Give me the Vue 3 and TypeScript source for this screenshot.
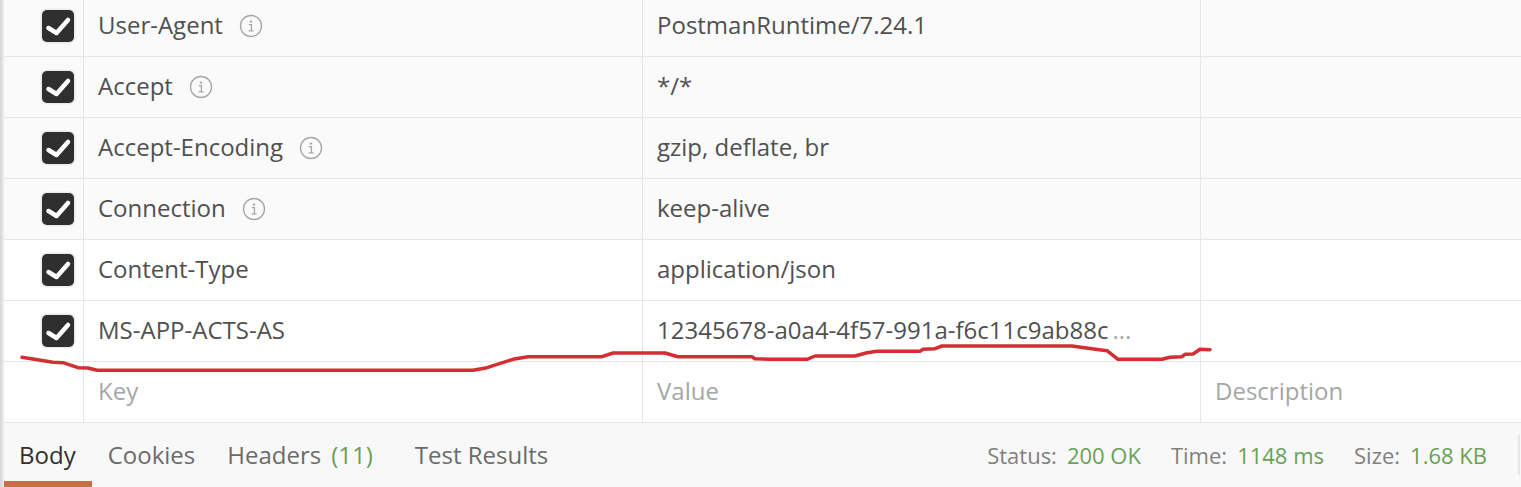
<script setup lang="ts">
interface Row { key: string; value: string; info: boolean; tint: boolean; more?: boolean }
const rows: Row[] = [
  { key: 'User-Agent', value: 'PostmanRuntime/7.24.1', info: true, tint: true },
  { key: 'Accept', value: '*/*', info: true, tint: true },
  { key: 'Accept-Encoding', value: 'gzip, deflate, br', info: true, tint: true },
  { key: 'Connection', value: 'keep-alive', info: true, tint: true },
  { key: 'Content-Type', value: 'application/json', info: false, tint: false },
  { key: 'MS-APP-ACTS-AS', value: '12345678-a0a4-4f57-991a-f6c11c9ab88c', info: false, tint: false, more: true },
]
const redLine = '22,357.3 53,362.3 63,362.7 78,367.7 88,368 97,370.3 473,370.3 487,367.7 513,359.3 528,356.7 602,356.7 613,353 665,353 678,356.7 752,356.7 755,358.7 770,359.3 807,359.3 815,356 855,356 867,352.7 877,351.3 920,351.3 923,349.3 935,348.7 942,346 1072,346 1088,348.3 1107,350.7 1118,359.3 1162,359.3 1170,357.3 1182,356.7 1185,354.3 1193,354 1200,349.3 1210,349.7'
</script>

<template>
  <div class="page">
    <div class="table">
      <div v-for="r in rows" :key="r.key" class="row" :class="{ tint: r.tint }">
        <div class="cell check">
          <span class="box">
            <svg width="32" height="32" viewBox="0 0 32 32"><path d="M6.5 18 L14.5 23 L26 10" fill="none" stroke="#fff" stroke-width="4.5" stroke-linecap="round" stroke-linejoin="round" /></svg>
          </span>
        </div>
        <div class="cell key">
          <span class="txt">{{ r.key }}</span>
          <svg v-if="r.info" class="info" width="24" height="24" viewBox="0 0 24 24">
            <circle cx="12" cy="12" r="10.5" fill="none" stroke="#a6a6a6" stroke-width="1.3" />
            <circle cx="12" cy="7.6" r="1.2" fill="#a6a6a6" />
            <path d="M9.8 10.6H12.4V16.6M9.6 16.8H14.6" fill="none" stroke="#a6a6a6" stroke-width="1.3" />
          </svg>
        </div>
        <div class="cell val">
          <span class="txt">{{ r.value }}</span><span v-if="r.more" class="more txt">...</span>
        </div>
        <div class="cell"></div>
      </div>
      <div class="row">
        <div class="cell check"></div>
        <div class="cell key ph"><span class="txt">Key</span></div>
        <div class="cell val ph"><span class="txt">Value</span></div>
        <div class="cell val ph"><span class="txt">Description</span></div>
      </div>
    </div>
    <div class="footer">
      <div class="tabs">
        <div class="tab active">Body</div>
        <div class="tab">Cookies</div>
        <div class="tab headers">Headers<span class="count">(11)</span></div>
        <div class="tab">Test Results</div>
      </div>
      <div class="meta">
        <span>Status:<b>200 OK</b></span>
        <span>Time:<b>1148 ms</b></span>
        <span>Size:<b>1.68 KB</b></span>
      </div>
      <div class="divider"></div>
    </div>
    <svg class="scribble" width="1521" height="487" viewBox="0 0 1521 487">
      <polyline :points="redLine" fill="none" stroke="#d32f33" stroke-width="3.5" stroke-linejoin="round" stroke-linecap="round" />
    </svg>
  </div>
</template>

<style>
html, body { margin: 0; background: #fff; }
</style>

<style scoped>
.page {
  position: relative;
  width: 1521px;
  height: 487px;
  overflow: hidden;
  box-sizing: border-box;
  padding-left: 3px;
  background: #fff;
  font-family: "Open Sans", sans-serif;
  font-size: 24px;
  color: #505050;
}
.page::before {
  content: "";
  position: absolute;
  left: 0;
  top: 0;
  bottom: 0;
  width: 4px;
  background: linear-gradient(to right, #d4d4d4, #f0f0f0);
}
.table { margin-top: -4px; }
.row {
  display: grid;
  grid-template-columns: 81px 559px 558px 1fr;
  height: 61px;
  box-sizing: border-box;
  border-bottom: 1px solid #e6e6e6;
  background: #fff;
}
.row.tint { background: #fafafa; }
.cell {
  display: flex;
  align-items: center;
  border-right: 1px solid #e6e6e6;
  padding-left: 14px;
  white-space: nowrap;
}
.cell:last-child { border-right: 0; }
.txt { margin-bottom: 4px; }
.check { padding-left: 0; justify-content: flex-end; padding-right: 9px; }
.box {
  display: block;
  width: 32px;
  height: 32px;
  border-radius: 5px;
  background: #2f2f2f;
  box-shadow: 0 0 0 1.5px #eaeaea;
}
.box svg { display: block; }
.info { margin-left: 16px; }
.more { color: #a9a9a9; margin-left: 4px; }
.ph { color: #a6a6a6; }
.footer {
  display: flex;
  align-items: center;
  height: 64px;
  box-sizing: border-box;
  background: #f8f8f8;
}
.tabs { display: flex; height: 100%; }
.tab {
  display: flex;
  align-items: center;
  height: 100%;
  box-sizing: border-box;
  padding: 0 16px 2px;
  color: #6b6b6b;
  white-space: nowrap;
}
.tab.headers { padding-right: 26px; }
.tab.active {
  color: #303030;
  border-bottom: 6px solid #c76f47;
  padding: 4px 16px 0;
}
.count { color: #6a9f58; margin-left: 10px; }
.meta {
  display: flex;
  margin-left: auto;
  gap: 30px;
  font-size: 22px;
  color: #808080;
  white-space: nowrap;
}
.meta b { font-weight: 400; color: #6a9f58; margin-left: 10px; }
.divider {
  width: 2px;
  height: 40px;
  margin: 0 1px 0 31px;
  background: #e6e6e6;
}
.scribble {
  position: absolute;
  left: 0;
  top: 0;
  pointer-events: none;
}
</style>
